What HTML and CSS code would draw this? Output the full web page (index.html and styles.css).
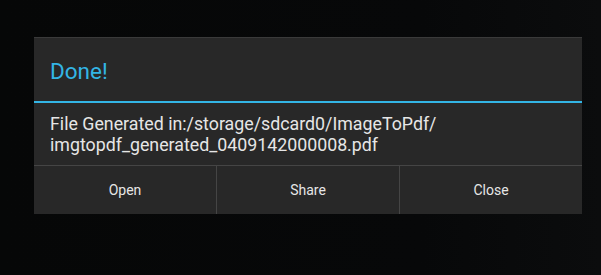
FILE: index.html
```html
<!DOCTYPE html>
<html>
<head>
<meta charset="utf-8">
<link rel="stylesheet" href="styles.css">
</head>
<body>
<div class="screen">
  <div class="dialog">
    <div class="title">Done!</div>
    <div class="message">File Generated in:/storage/sdcard0/ImageToPdf/<br>imgtopdf_generated_0409142000008.pdf</div>
    <div class="buttons">
      <div class="btn">Open</div>
      <div class="btn">Share</div>
      <div class="btn">Close</div>
    </div>
  </div>
</div>
</body>
</html>
```
FILE: styles.css
```css
html, body {
  margin: 0;
  padding: 0;
  background: #070808;
}
.screen {
  width: 601px;
  height: 275px;
  padding: 37px 0 0 34px;
  box-sizing: border-box;
  background: linear-gradient(90deg, #060707 0%, #070809 70%, #0b0c0d 100%);
  font-family: Roboto, "Noto Sans", sans-serif;
}
.dialog {
  width: 548px;
  background: #282828;
  border-top: 1px solid #3a3a3a;
  box-sizing: border-box;
  display: flex;
  flex-direction: column;
}
.title {
  display: flex;
  align-items: center;
  padding-left: 16px;
  color: #33b5e5;
  font-size: 22.5px;
  border-bottom: 2px solid #33b5e5;
  box-sizing: border-box;
  height: 65px;
  padding-top: 2px;
}
.message {
  color: #e6e6e6;
  font-size: 17.8px;
  line-height: 21px;
  padding: 10px 16px 10px 16px;
  height: 62px;
  box-sizing: border-box;
}
.buttons {
  display: flex;
  border-top: 1px solid #454545;
  height: 48px;
}
.btn {
  flex: 1;
  display: flex;
  align-items: center;
  justify-content: center;
  color: #e6e6e6;
  font-size: 14px;
}
.btn + .btn {
  border-left: 1px solid #454545;
}
```
